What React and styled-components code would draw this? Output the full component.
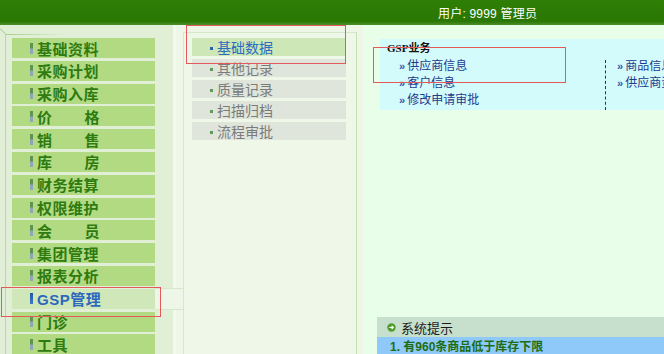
import React from "react";
import styled, { createGlobalStyle, css } from "styled-components";

const Global = createGlobalStyle`
  html, body { margin: 0; padding: 0; background: #ffffff; }
  body { font-family: "Liberation Sans", "Noto Sans CJK SC", sans-serif; }
`;

const CJK = `"Liberation Sans", "Noto Sans CJK SC", sans-serif`;

const Screen = styled.div`
  position: relative;
  width: 664px;
  height: 354px;
  overflow: hidden;
  display: flex;
  flex-direction: column;
  font-family: ${CJK};
`;

const Header = styled.div`
  height: 25px;
  flex: none;
  background: linear-gradient(#2f7f06, #2a7703 85%, #4c8f2c);
  display: flex;
  align-items: center;
  padding-left: 438px;
  color: #ffffff;
  font-size: 12px;
  letter-spacing: 0.2px;
`;

const Body = styled.div`
  flex: 1;
  display: flex;
  min-height: 0;
`;

/* ---------- left menu ---------- */
const LeftPanel = styled.div`
  position: relative;
  width: 176px;
  flex: none;
  background: #e2efd7;
  border-right: 3px solid #f4f9ef;
  padding: 9px 0 0 5px;
  box-sizing: border-box;
`;

const Corner = styled.svg`
  position: absolute;
  left: 0;
  top: 3px;
`;

const MenuFrame = styled.div`
  position: relative;
  border-left: 1px solid #b9d7a3;
  padding: 4px 0 0 6px;
  height: 100%;
  box-sizing: border-box;
  &::before {
    content: "";
    position: absolute;
    left: 0;
    top: 0;
    width: 60px;
    height: 1px;
    background: linear-gradient(to right, #a9cd91, rgba(169, 205, 145, 0));
  }
`;

const MenuList = styled.div`
  display: flex;
  flex-direction: column;
  gap: 2.8px;
`;

const MenuItem = styled.div`
  position: relative;
  width: 143px;
  height: 20px;
  background: #b2da82;
  display: flex;
  align-items: center;
  padding-left: 18px;
  box-sizing: border-box;
  font-size: 15px;
  font-weight: bold;
  color: #2e7b0f;
  letter-spacing: 0.5px;
  ${(p) =>
    p.$active &&
    css`
      z-index: 2;
      background: #d0e8b9;
      color: #2c68bd;
      &::after {
        content: "";
        position: absolute;
        left: 100%;
        top: -1px;
        bottom: -1px;
        width: 28px;
        background: #eef6e7;
        border-top: 1px solid #d7e8c9;
        border-bottom: 1px solid #d7e8c9;
      }
    `}
`;

const Bar = styled.span`
  width: 3px;
  height: 11px;
  margin-right: 4px;
  flex: none;
  background: ${(p) =>
    p.$active
      ? "linear-gradient(#1f56a8, #3f78c2)"
      : "linear-gradient(#5f9450 0%, #5f9450 45%, #8ea6b8 55%, #8ea6b8 100%)"};
`;

const Label = styled.span`
  display: inline-block;
  ${(p) =>
    p.$spread &&
    css`
      width: 63px;
      text-align: justify;
      text-align-last: justify;
    `}
`;

/* ---------- middle submenu ---------- */
const MidPanel = styled.div`
  width: 187px;
  flex: none;
  background: #eef6e7;
  padding: 7px 6px 0 7px;
  box-sizing: border-box;
  display: flex;
`;

const MidInner = styled.div`
  flex: 1;
  background: #eff7e9;
  border-top: 1px solid #d6e8c8;
  border-left: 1px solid #d6e8c8;
  border-right: 1px solid #c4e1ae;
  padding: 5px 10px 0 8px;
  display: flex;
  flex-direction: column;
  gap: 3px;
`;

const SubItem = styled.div`
  height: 18px;
  display: flex;
  align-items: center;
  padding-left: 18px;
  background: ${(p) => (p.$active ? "#cde7b6" : "#dfe5da")};
  color: ${(p) => (p.$active ? "#2b6cc0" : "#7b7b7b")};
  font-size: 14px;
`;

const Dot = styled.span`
  width: 3px;
  height: 3px;
  margin-right: 4px;
  margin-top: 2px;
  flex: none;
  background: ${(p) => (p.$active ? "#2b62b0" : "#5f9a5c")};
`;

/* ---------- right content ---------- */
const Content = styled.div`
  flex: 1;
  background: #e8fee8;
  display: flex;
  flex-direction: column;
  padding-top: 14px;
`;

const Card = styled.div`
  margin-left: 17px;
  height: 71px;
  background: #d4fbfb;
  display: flex;
  flex-direction: column;
`;

const CardTitle = styled.div`
  height: 19px;
  line-height: 19px;
  padding-left: 7px;
  font-size: 11px;
  font-weight: bold;
  color: #111111;
  font-family: "Liberation Serif", "Noto Sans CJK SC", serif;
`;

const CardCols = styled.div`
  flex: 1;
  display: flex;
`;

const LinkCol = styled.div`
  display: flex;
  flex-direction: column;
  padding-left: ${(p) => (p.$divider ? "11px" : "19px")};
  width: ${(p) => (p.$divider ? "auto" : "206px")};
  flex: ${(p) => (p.$divider ? "1" : "none")};
  border-left: ${(p) => (p.$divider ? "1px dashed #333333" : "none")};
  margin-top: ${(p) => (p.$divider ? "2px" : "0")};
  white-space: nowrap;
  overflow: hidden;
`;

const LinkRow = styled.div`
  height: 17px;
  line-height: 17px;
  font-size: 12px;
  color: #1d3a8e;
  display: flex;
  align-items: center;
  margin-top: ${(p) => (p.$shift ? "-2px" : "0")};
`;

const Chev = styled.span`
  color: #2a5bb0;
  font-size: 11px;
  font-weight: bold;
  margin-right: 3px;
  letter-spacing: -1px;
`;

const Spacer = styled.div`
  flex: 1;
`;

const TipBar = styled.div`
  margin-left: 14px;
  height: 20px;
  background: #c6e0cd;
  display: flex;
  align-items: center;
  padding-left: 10px;
  font-size: 13px;
  color: #1c1c1c;
`;

const TipIcon = styled.svg`
  margin-right: 5px;
  flex: none;
`;

const AlertRow = styled.div`
  margin-left: 14px;
  height: 17px;
  background: #8fc9fa;
  display: flex;
  align-items: center;
  padding-left: 13px;
  font-size: 12px;
  font-weight: bold;
  color: #1d6e12;
  white-space: nowrap;
`;

/* ---------- annotation overlays ---------- */
const Mark = styled.div`
  position: absolute;
  border: 1px solid #e45a5a;
  pointer-events: none;
  z-index: 5;
  left: ${(p) => p.$x}px;
  top: ${(p) => p.$y}px;
  width: ${(p) => p.$w}px;
  height: ${(p) => p.$h}px;
`;

const menu = [
  { t: "基础资料" },
  { t: "采购计划" },
  { t: "采购入库" },
  { t: "价格", spread: true },
  { t: "销售", spread: true },
  { t: "库房", spread: true },
  { t: "财务结算" },
  { t: "权限维护" },
  { t: "会员", spread: true },
  { t: "集团管理" },
  { t: "报表分析" },
  { t: "GSP管理", active: true },
  { t: "门诊" },
  { t: "工具" },
];

const sub = [
  { t: "基础数据", active: true },
  { t: "其他记录" },
  { t: "质量记录" },
  { t: "扫描归档" },
  { t: "流程审批" },
];

export default function App() {
  return (
    <>
      <Global />
      <Screen>
        <Header>用户: 9999 管理员</Header>
        <Body>
          <LeftPanel>
            <Corner width="8" height="8" viewBox="0 0 8 8">
              <line x1="0" y1="0.5" x2="6" y2="6.5" stroke="#9fc687" strokeWidth="1" />
            </Corner>
            <MenuFrame>
              <MenuList>
                {menu.map((m) => (
                  <MenuItem key={m.t} $active={m.active}>
                    <Bar $active={m.active} />
                    <Label $spread={m.spread}>{m.t}</Label>
                  </MenuItem>
                ))}
              </MenuList>
            </MenuFrame>
          </LeftPanel>

          <MidPanel>
            <MidInner>
              {sub.map((s) => (
                <SubItem key={s.t} $active={s.active}>
                  <Dot $active={s.active} />
                  {s.t}
                </SubItem>
              ))}
            </MidInner>
          </MidPanel>

          <Content>
            <Card>
              <CardTitle>GSP业务</CardTitle>
              <CardCols>
                <LinkCol>
                  <LinkRow><Chev>»</Chev>供应商信息</LinkRow>
                  <LinkRow><Chev>»</Chev>客户信息</LinkRow>
                  <LinkRow><Chev>»</Chev>修改申请审批</LinkRow>
                </LinkCol>
                <LinkCol $divider>
                  <LinkRow $shift><Chev>»</Chev>商品信息</LinkRow>
                  <LinkRow><Chev>»</Chev>供应商资质</LinkRow>
                </LinkCol>
              </CardCols>
            </Card>
            <Spacer />
            <TipBar>
              <TipIcon width="9" height="9" viewBox="0 0 9 9">
                <circle cx="4.5" cy="4.5" r="4.2" fill="#4f9d2c" />
                <path d="M2.3 4.5 H6.2 M4.6 2.8 L6.3 4.5 L4.6 6.2" stroke="#ffffff" strokeWidth="1.2" fill="none" />
              </TipIcon>
              系统提示
            </TipBar>
            <AlertRow>1. 有960条商品低于库存下限</AlertRow>
          </Content>
        </Body>

        <Mark $x={1} $y={287} $w={158} $h={28} />
        <Mark $x={186} $y={25} $w={158} $h={37} />
        <Mark $x={373} $y={47} $w={191} $h={34} />
      </Screen>
    </>
  );
}
